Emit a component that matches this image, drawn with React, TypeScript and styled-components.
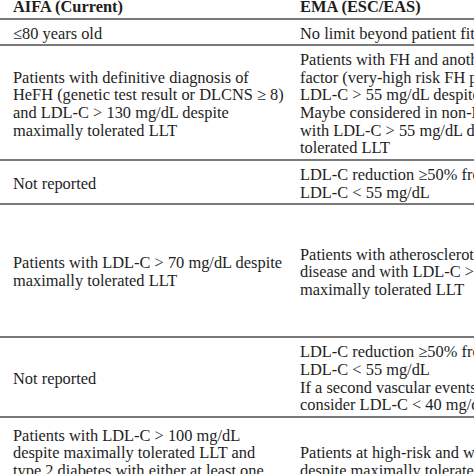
import React from "react";
import styled, { createGlobalStyle } from "styled-components";

const Global = createGlobalStyle`
  html, body { margin: 0; padding: 0; background: #ffffff; overflow: hidden; }
  #root { width: 474px; height: 474px; overflow: hidden; }
`;

const Page = styled.div`
  width: 474px;
  height: 474px;
  overflow: hidden;
  background: #fff;
  font-family: "Liberation Serif", "DejaVu Serif", serif;
  font-size: 16.4px;
  line-height: 17.6px;
  color: #1e1e1e;
`;

const Table = styled.div`
  margin-top: -7px;
  width: 760px;
  display: flex;
  flex-direction: column;
`;

const Row = styled.div<{ $h: number; $head?: boolean }>`
  display: grid;
  grid-template-columns: 287px 1fr;
  height: ${(p) => p.$h}px;
  box-sizing: border-box;
  border-bottom: 2px solid #7a7a7a;
  align-items: center;
  font-weight: ${(p) => (p.$head ? 700 : 400)};
`;

const Cell = styled.div`
  padding-left: 13px;
  padding-top: 3px;
  white-space: nowrap;
`;

const Line = styled.div``;

type RowData = { h: number; head?: boolean; a: string[]; b: string[] };

const rows: RowData[] = [
  { h: 27, head: true, a: ["AIFA (Current)"], b: ["EMA (ESC/EAS)"] },
  { h: 26, a: ["≤80 years old"], b: ["No limit beyond patient fitness"] },
  {
    h: 115,
    a: [
      "Patients with definitive diagnosis of",
      "HeFH (genetic test result or DLCNS ≥ 8)",
      "and LDL-C > 130 mg/dL despite",
      "maximally tolerated LLT",
    ],
    b: [
      "Patients with FH and another risk",
      "factor (very-high risk FH patients) and",
      "LDL-C > 55 mg/dL despite maximally tolerated LLT",
      "Maybe considered in non-FH patients",
      "with LDL-C > 55 mg/dL despite maximally",
      "tolerated LLT",
    ],
  },
  {
    h: 44,
    a: ["Not reported"],
    b: ["LDL-C reduction ≥50% from baseline and", "LDL-C < 55 mg/dL"],
  },
  {
    h: 133,
    a: ["Patients with LDL-C > 70 mg/dL despite", "maximally tolerated LLT"],
    b: [
      "Patients with atherosclerotic cardiovascular",
      "disease and with LDL-C > 70 mg/dL despite",
      "maximally tolerated LLT",
    ],
  },
  {
    h: 80,
    a: ["Not reported"],
    b: [
      "LDL-C reduction ≥50% from baseline and",
      "LDL-C < 55 mg/dL",
      "If a second vascular events within 2 years,",
      "consider LDL-C < 40 mg/dL",
    ],
  },
  {
    h: 104,
    a: [
      "Patients with LDL-C > 100 mg/dL",
      "despite maximally tolerated LLT and",
      "type 2 diabetes with either at least one",
      "target organ damage or at least",
      "one additional risk factor",
    ],
    b: [
      "Patients at high-risk and with LDL-C > 70 mg/dL",
      "despite maximally tolerated LLT",
      "Patients with type 2 diabetes and target",
    ],
  },
];

export default function App() {
  return (
    <Page>
      <Global />
      <Table>
        {rows.map((r, i) => (
          <Row key={i} $h={r.h} $head={r.head}>
            <Cell>
              {r.a.map((t, j) => (
                <Line key={j}>{t}</Line>
              ))}
            </Cell>
            <Cell>
              {r.b.map((t, j) => (
                <Line key={j}>{t}</Line>
              ))}
            </Cell>
          </Row>
        ))}
      </Table>
    </Page>
  );
}
